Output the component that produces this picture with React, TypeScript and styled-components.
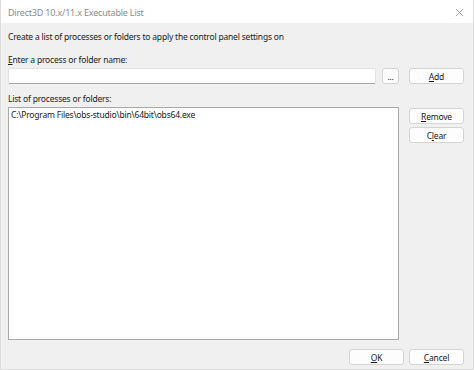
import styled, { createGlobalStyle } from "styled-components";

const Global = createGlobalStyle`
  html, body {
    margin: 0;
    padding: 0;
    background: #ffffff;
  }
  * {
    box-sizing: border-box;
  }
`;

const Window = styled.div`
  display: flex;
  flex-direction: column;
  width: 474px;
  height: 370px;
  font-family: "Noto Sans", "Open Sans", sans-serif;
  font-size: 8.5px;
  letter-spacing: -0.2px;
  color: #1a1a1a;
  border-left: 1px solid #dcdcdc;
  border-right: 1px solid #dcdcdc;
  border-bottom: 1px solid #dcdcdc;
`;

const TitleBar = styled.div`
  display: flex;
  align-items: center;
  justify-content: space-between;
  height: 23px;
  padding: 1px 7px 0 7px;
  background: #ffffff;
  color: #8c8c8c;
  font-size: 9px;
`;

const CloseIcon = styled.svg`
  width: 9px;
  height: 9px;
  margin-right: 2px;
`;

const Body = styled.div`
  flex: 1;
  display: grid;
  grid-template-columns: 1fr 55px;
  grid-template-rows: auto auto 16px auto 1fr 16px;
  column-gap: 10px;
  padding: 7px 9px 4px 7px;
  background: #f0f0f0;
`;

const Label = styled.div<{ $top?: number }>`
  grid-column: 1 / -1;
  line-height: 14px;
  margin-top: ${(p) => p.$top ?? 0}px;
  margin-bottom: 1px;
  white-space: nowrap;
`;

const InputRow = styled.div`
  display: flex;
  gap: 6px;
`;

const TextField = styled.div`
  flex: 1;
  background: #ffffff;
  border: 1px solid #e2e2e2;
  border-bottom-color: #a8a8a8;
  border-radius: 2px;
`;

const Button = styled.div<{ $w?: number }>`
  display: flex;
  align-items: center;
  justify-content: center;
  width: ${(p) => (p.$w ? `${p.$w}px` : "55px")};
  height: 16px;
  background: #fdfdfd;
  border: 1px solid #d4d4d4;
  border-radius: 3px;
  color: #1a1a1a;
`;

const ListBox = styled.div`
  background: #ffffff;
  border: 1px solid #a9a9a9;
  padding: 1px 2px;
  margin-bottom: 9px;
`;

const ListItem = styled.div`
  line-height: 12px;
  white-space: nowrap;
`;

const SideButtons = styled.div`
  display: flex;
  flex-direction: column;
  gap: 3px;
  padding-top: 1px;
`;

const Footer = styled.div`
  grid-column: 1 / -1;
  display: flex;
  justify-content: flex-end;
  gap: 5px;
`;

export default function App() {
  return (
    <>
      <Global />
      <Window>
        <TitleBar>
          <span>Direct3D 10.x/11.x Executable List</span>
          <CloseIcon viewBox="0 0 10 10">
            <path d="M1 1 L9 9 M9 1 L1 9" stroke="#9a9a9a" strokeWidth="1" fill="none" />
          </CloseIcon>
        </TitleBar>
        <Body>
          <Label>Create a list of processes or folders to apply the control panel settings on</Label>
          <Label $top={8}>
            <u>E</u>nter a process or folder name:
          </Label>
          <InputRow>
            <TextField />
            <Button $w={17}>...</Button>
          </InputRow>
          <Button>
            <u>A</u>dd
          </Button>
          <Label $top={8}>List of processes or folders:</Label>
          <ListBox>
            <ListItem>C:\Program Files\obs-studio\bin\64bit\obs64.exe</ListItem>
          </ListBox>
          <SideButtons>
            <Button>
              <u>R</u>emove
            </Button>
            <Button>
              C<u>l</u>ear
            </Button>
          </SideButtons>
          <Footer>
            <Button>
              <u>O</u>K
            </Button>
            <Button>
              <u>C</u>ancel
            </Button>
          </Footer>
        </Body>
      </Window>
    </>
  );
}
